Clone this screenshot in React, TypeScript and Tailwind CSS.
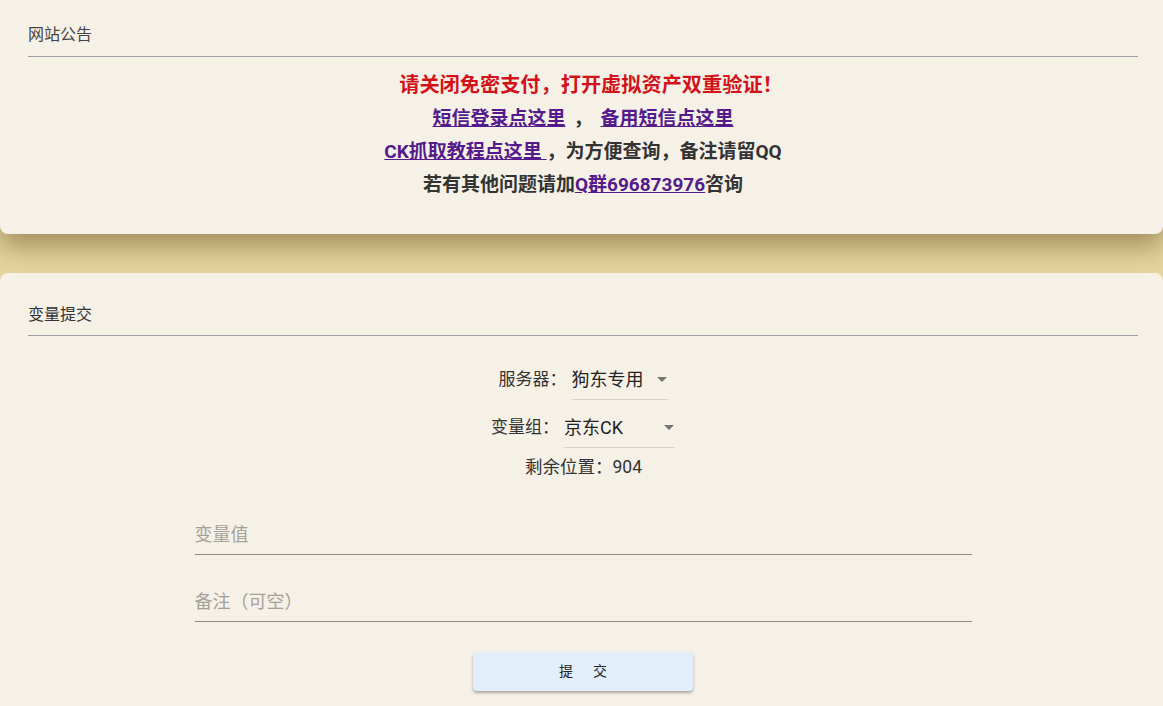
import React from "react";

function Caret() {
  return (
    <svg width="10" height="6" viewBox="0 0 10 6" className="shrink-0">
      <path d="M0 0 L10 0 L5 5 Z" fill="#757575" />
    </svg>
  );
}

export default function App() {
  const font = { fontFamily: 'Roboto, "Noto Sans CJK SC", "Noto Sans", sans-serif' };
  return (
    <div
      className="w-[1163px] h-[706px] overflow-hidden bg-[#e6d5a0] text-[#333]"
      style={font}
    >
      {/* Announcement card */}
      <div className="rounded-b-lg bg-[#f6f1e7] pl-7 pr-[25px] pt-[23px] pb-[33px] shadow-[0_12px_28px_rgba(110,90,40,0.6)] relative z-10">
        <div className="text-[16px] leading-[24px] text-[#444] pb-[9px] border-b border-[#9e9ea4]">网站公告</div>
        <div className="mt-[12px] flex flex-col items-center font-bold text-[19px] leading-[33px] text-[#333]">
          <div className="text-[#d3111b] text-[20.2px] pl-[16px]">请关闭免密支付，打开虚拟资产双重验证！</div>
          <div>
            <a className="text-[#551a8b] underline">短信登录点这里</a>
            <span className="mx-[8px]">，</span>
            <a className="text-[#551a8b] underline">备用短信点这里</a>
          </div>
          <div>
            <a className="text-[#551a8b] underline">CK抓取教程点这里 </a>
            <span>，为方便查询，备注请留QQ</span>
          </div>
          <div>
            若有其他问题请加<a className="text-[#551a8b] underline">Q群696873976</a>咨询
          </div>
        </div>
      </div>

      {/* Submit card */}
      <div className="mt-[39px] rounded-t-lg bg-[#f6f1e7] pl-7 pr-[25px] pt-[30px] h-[460px] relative z-10">
        <div className="text-[16px] leading-[24px] text-[#333] pb-[8px] border-b border-[#9e9ea4]">变量提交</div>

        <div className="mt-[24px] flex flex-col items-center">
          <div className="flex items-center h-[40px]">
            <span className="text-[17px] text-[#333] mr-[5px]">服务器：</span>
            <div className="w-[96px] h-[40px] flex items-center justify-between border-b border-[#d6d3cc]">
              <span className="text-[18px] text-[#222]">狗东专用</span>
              <span className="mr-[1px]"><Caret /></span>
            </div>
          </div>
          <div className="flex items-center h-[40px] mt-[8px]">
            <span className="text-[17px] text-[#333] mr-[5px]">变量组：</span>
            <div className="w-[111px] h-[40px] flex items-center justify-between border-b border-[#d6d3cc]">
              <span className="text-[18px] text-[#222]">京东CK</span>
              <span className="mr-[1px]"><Caret /></span>
            </div>
          </div>
          <div className="mt-[7px] text-[17.5px] leading-[24px] text-[#333] pl-[1px]">剩余位置：904</div>
        </div>

        <div className="mx-auto w-[777px] mt-[36px] flex flex-col gap-[27px]">
          <div className="h-[40px] border-b border-[#8d8a85] flex items-center">
            <span className="text-[18px] text-[#a4a19c]">变量值</span>
          </div>
          <div className="h-[40px] border-b border-[#8d8a85] flex items-center">
            <span className="text-[18px] text-[#a4a19c]">备注（可空）</span>
          </div>
        </div>

        <div className="mt-[30px] flex justify-center">
          <button className="w-[220px] h-[39px] rounded bg-[#e2effa] shadow-[0_2px_3px_rgba(0,0,0,0.3)] text-[14px] text-[#222] tracking-[20px] pl-[20px]">
            提交
          </button>
        </div>
      </div>
    </div>
  );
}
